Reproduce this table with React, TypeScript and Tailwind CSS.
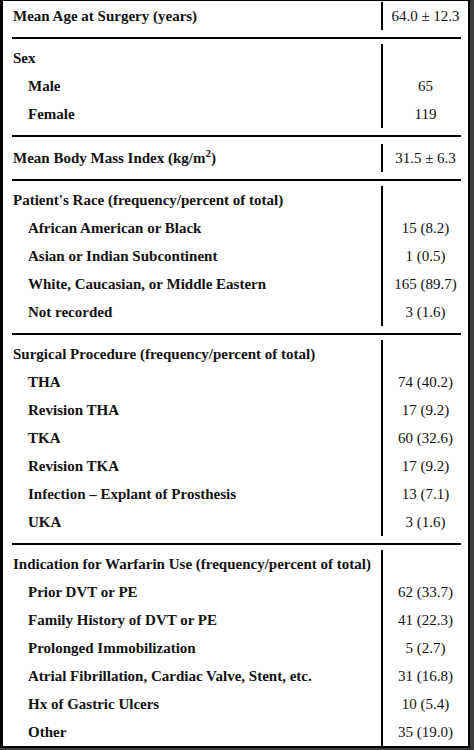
import React from "react";

type Row = { label: React.ReactNode; value?: string; indent?: boolean };

const groups: { rows: Row[]; sepClass?: string }[] = [
  { rows: [{ label: "Mean Age at Surgery (years)", value: "64.0 ± 12.3" }] },
  {
    rows: [
      { label: "Sex" },
      { label: "Male", value: "65", indent: true },
      { label: "Female", value: "119", indent: true },
    ],
    sepClass: "mt-[7px] mb-[7px]",
  },
  {
    rows: [
      {
        label: (
          <>
            Mean Body Mass Index (kg/m<sup className="text-[11px]">2</sup>)
          </>
        ),
        value: "31.5 ± 6.3",
      },
    ],
  },
  {
    rows: [
      { label: "Patient's Race (frequency/percent of total)" },
      { label: "African American or Black", value: "15 (8.2)", indent: true },
      { label: "Asian or Indian Subcontinent", value: "1 (0.5)", indent: true },
      { label: "White, Caucasian, or Middle Eastern", value: "165 (89.7)", indent: true },
      { label: "Not recorded", value: "3 (1.6)", indent: true },
    ],
  },
  {
    rows: [
      { label: "Surgical Procedure (frequency/percent of total)" },
      { label: "THA", value: "74 (40.2)", indent: true },
      { label: "Revision THA", value: "17 (9.2)", indent: true },
      { label: "TKA", value: "60 (32.6)", indent: true },
      { label: "Revision TKA", value: "17 (9.2)", indent: true },
      { label: "Infection – Explant of Prosthesis", value: "13 (7.1)", indent: true },
      { label: "UKA", value: "3 (1.6)", indent: true },
    ],
  },
  {
    rows: [
      { label: "Indication for Warfarin Use (frequency/percent of total)" },
      { label: "Prior DVT or PE", value: "62 (33.7)", indent: true },
      { label: "Family History of DVT or PE", value: "41 (22.3)", indent: true },
      { label: "Prolonged Immobilization", value: "5 (2.7)", indent: true },
      { label: "Atrial Fibrillation, Cardiac Valve, Stent, etc.", value: "31 (16.8)", indent: true },
      { label: "Hx of Gastric Ulcers", value: "10 (5.4)", indent: true },
      { label: "Other", value: "35 (19.0)", indent: true },
    ],
  },
];

export default function App() {
  return (
    <div
      className="w-[474px] h-[750px] bg-[#3c3c3c] text-[#111]"
      style={{ fontFamily: '"Liberation Serif", "Times New Roman", serif' }}
    >
      <div className="w-[470px] h-[748px] bg-white border-l-[3px] border-t border-r-2 border-b-2 border-black pt-[1px] overflow-hidden">
        {groups.map((g, gi) => (
          <div key={gi}>
            {g.rows.map((r, ri) => (
              <div key={ri} className="flex h-[28px] items-center">
                <div
                  className={`w-[378px] text-[15px] font-bold whitespace-nowrap ${
                    r.indent ? "pl-[25px]" : "pl-[10px]"
                  }`}
                >
                  {r.label}
                </div>
                <div className="flex-1 h-full border-l-2 border-black flex items-center justify-center text-[15px]">
                  {r.value}
                </div>
              </div>
            ))}
            {gi < groups.length - 1 && (
              <div className={g.sepClass ?? "mt-[7px] mb-[5px]"}>
                <div className="ml-[9px] mr-[7px] h-[2px] bg-black" />
              </div>
            )}
          </div>
        ))}
      </div>
    </div>
  );
}
